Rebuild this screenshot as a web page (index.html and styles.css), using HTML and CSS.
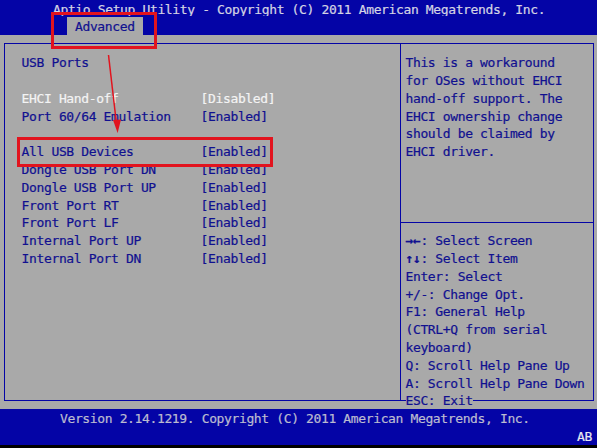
FILE: index.html
```html
<!DOCTYPE html>
<html lang="en">
<head>
  <meta charset="UTF-8">
  <meta name="viewport" content="width=device-width, initial-scale=1.0">
  <title>Aptio Setup Utility - Advanced</title>
  <link rel="stylesheet" href="styles.css">
</head>
<body>
  <div class="screen">
    <header class="top-bar">
      <div class="title">Aptio Setup Utility - Copyright (C) 2011 American Megatrends, Inc.</div>
      <div class="tabs"><span class="tab">Advanced</span></div>
    </header>

    <main class="page">
      <div class="frame">
        <section class="settings">
          <div class="line">USB Ports</div>
          <div class="line"></div>
          <div class="line item selected"><span class="label">EHCI Hand-off</span><span>[Disabled]</span></div>
          <div class="line item"><span class="label">Port 60/64 Emulation</span><span>[Enabled]</span></div>
          <div class="line"></div>
          <div class="line item"><span class="label">All USB Devices</span><span>[Enabled]</span></div>
          <div class="line item"><span class="label">Dongle USB Port DN</span><span>[Enabled]</span></div>
          <div class="line item"><span class="label">Dongle USB Port UP</span><span>[Enabled]</span></div>
          <div class="line item"><span class="label">Front Port RT</span><span>[Enabled]</span></div>
          <div class="line item"><span class="label">Front Port LF</span><span>[Enabled]</span></div>
          <div class="line item"><span class="label">Internal Port UP</span><span>[Enabled]</span></div>
          <div class="line item"><span class="label">Internal Port DN</span><span>[Enabled]</span></div>
        </section>

        <aside class="side">
          <div class="help">
            <div class="line">This is a workaround</div>
            <div class="line">for OSes without EHCI</div>
            <div class="line">hand-off support. The</div>
            <div class="line">EHCI ownership change</div>
            <div class="line">should be claimed by</div>
            <div class="line">EHCI driver.</div>
          </div>
          <div class="keys">
            <div class="line"><b class="arrows">&rarr;&larr;</b>: Select Screen</div>
            <div class="line"><b class="arrows">&uarr;&darr;</b>: Select Item</div>
            <div class="line">Enter: Select</div>
            <div class="line">+/-: Change Opt.</div>
            <div class="line">F1: General Help</div>
            <div class="line">(CTRL+Q from serial</div>
            <div class="line">keyboard)</div>
            <div class="line">Q: Scroll Help Pane Up</div>
            <div class="line">A: Scroll Help Pane Down</div>
            <div class="line"><span class="esc">ESC: Exit</span></div>
          </div>
        </aside>
      </div>
    </main>

    <footer class="bottom-bar">
      <div class="line version">Version 2.14.1219. Copyright (C) 2011 American Megatrends, Inc.</div>
      <div class="line lang">AB</div>
    </footer>

    <!-- red markup drawn over the screen -->
    <svg class="marks" width="597" height="445" viewBox="0 0 597 445">
      <rect x="52.5" y="13.5" width="103" height="34" fill="none" stroke="#e2141e" stroke-width="3"/>
      <rect x="18.5" y="138.5" width="253" height="27" fill="none" stroke="#e2141e" stroke-width="3"/>
      <line x1="108.5" y1="55" x2="116.5" y2="124" stroke="#e2141e" stroke-width="1.5"/>
      <polygon points="113,120 121,119.5 117.6,133" fill="#e2141e"/>
    </svg>
  </div>
</body>
</html>
```

FILE: styles.css
```css
body {
  margin: 0;
  background: #000;
}

.screen {
  position: relative;
  width: 597px;
  height: 445px;
  overflow: hidden;
  font-family: "DejaVu Sans Mono", monospace;
  font-size: 13px;
  letter-spacing: -0.37px;
  color: #101090;
  -webkit-text-stroke: 0.2px;
}

.line {
  height: 17.8px;
  line-height: 17.8px;
  white-space: pre;
}

/* title + tab strip */
.top-bar {
  height: 35px;
  background: #0404a6;
}
.title {
  height: 16px;
  padding: 1px 0 0 53px;
  box-sizing: border-box;
  overflow: hidden;
  line-height: 17.8px;
  white-space: pre;
  color: #d4d4e4;
}
.tabs {
  display: flex;
  height: 19px;
  padding: 1px 0 0 67px;
  box-sizing: border-box;
}
.tab {
  width: 76px;
  height: 18px;
  padding-left: 8px;
  box-sizing: border-box;
  overflow: hidden;
  line-height: 20px;
  background: #a9a9a9;
}

/* gray work area */
.page {
  height: 374px;
  padding-top: 8px;
  box-sizing: border-box;
  background: #a9a9a9;
}
.frame {
  display: flex;
  width: 590px;
  height: 358px;
  margin-left: 4px;
  border: 1px solid #0404a6;
  box-sizing: border-box;
}
.settings {
  width: 395px;
  padding: 10.3px 0 0 16.6px;
  box-sizing: border-box;
}
.item {
  display: flex;
}
.item .label {
  width: 179px;
}
.selected {
  color: #f4f4f4;
}

.side {
  flex: 1;
  display: flex;
  flex-direction: column;
  border-left: 1px solid #0404a6;
}
.help {
  flex-shrink: 0;
  height: 179px;
  padding: 10.3px 0 0 4.5px;
  box-sizing: border-box;
  border-bottom: 1px solid #0404a6;
}
.keys {
  flex-shrink: 0;
  padding: 9.3px 0 0 4.5px;
}
.arrows {
  font-weight: bold;
}
.esc {
  background: #a9a9a9;
}

/* version strip */
.bottom-bar {
  height: 36px;
  padding-top: 0.9px;
  box-sizing: border-box;
  background: #0404a6;
  color: #bcbcd0;
}
.version {
  padding-left: 60px;
}
.lang {
  padding-right: 5px;
  text-align: right;
  color: #e8e8f0;
}

.marks {
  position: absolute;
  left: 0;
  top: 0;
  pointer-events: none;
}
```
